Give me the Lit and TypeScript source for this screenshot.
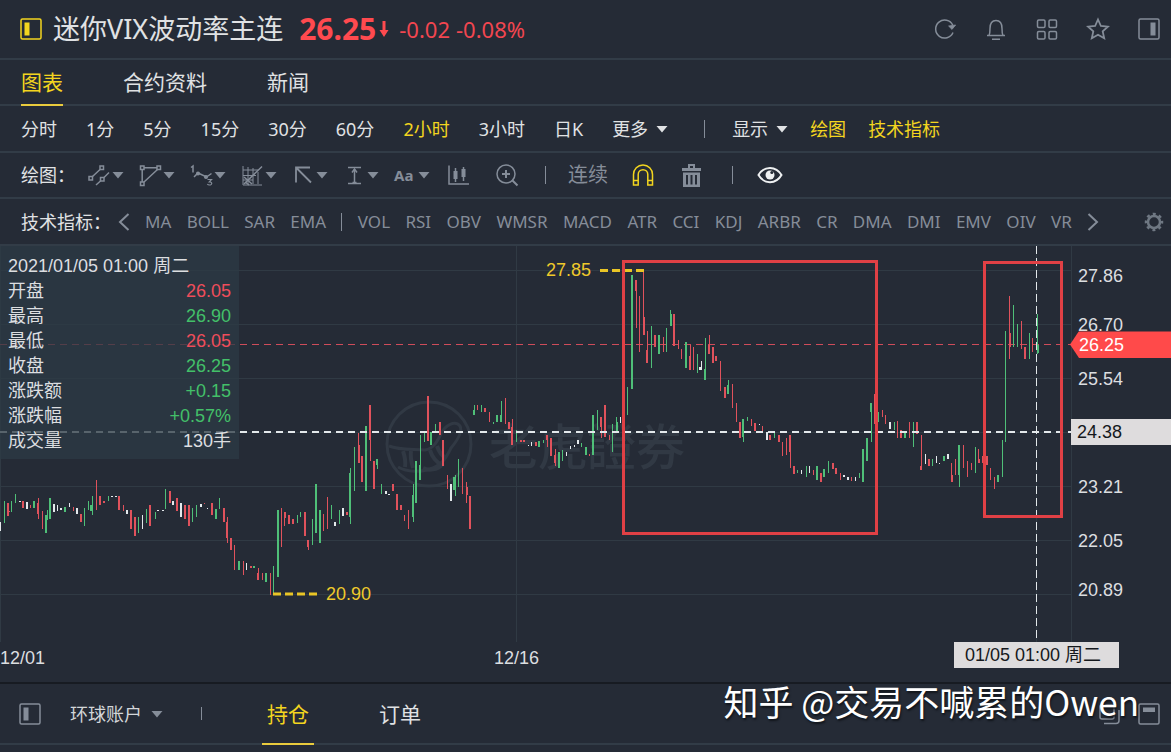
import { LitElement, html, svg, css } from "lit";
import { customElement, state } from "lit/decorators.js";
import { classMap } from "lit/directives/class-map.js";
import { styleMap } from "lit/directives/style-map.js";

const PLOT_W = 1071;
const PLOT_H = 396;
const STRIP_W = 1171;

type Tone = "r" | "g" | "w";
type Bar = { x: number; top: number; bottom: number; tone: Tone; width: number };

/* Bars are listed per section as "tone x high low [width]", in thirds of a pixel from the section origin. */
const SECTIONS: [number, number, string][] = [
  [0, 224, `w 1 155 183 1,g 12 94 158 1,r 23 98 138 2,r 28 122 126 1,g 34 94 125 1,g 46 72 98 1,w 60 93 97 2,r 69 94 113 2,
    w 80 97 116 2,r 91 104 114 1,g 103 92 114 2,r 115 84 146 1,r 114 100 133 2,r 127 124 178 1,g 138 135 188 2,g 142 120 150 1,g 149 84 146 2,
    w 161 101 125 2,w 172 104 123 1,w 184 113 120 2,g 195 112 126 2,w 208 98 110 1,r 219 110 123 1,w 230 113 132 2,
    r 243 133 156 2,g 254 115 168 1,g 265 92 120 1,g 276 78 135 1,g 273 105 123 2,r 290 30 120 1,r 299 78 104 2,r 311 93 100 2,
    g 324 78 94 1,w 336 77 81 2,w 348 77 81 2,r 357 78 120 2,r 370 105 123 1,w 382 121 132 2,r 393 120 178 2,
    r 405 140 197 2,g 415 140 188 1,w 428 135 178 1,g 438 118 158 1,r 450 105 168 2,g 465 125 147 1,w 475 120 124 2,
    w 489 120 124 2,g 496 57 118 1,r 510 62 99 2,w 519 93 105 2,r 531 85 123 2,w 543 98 140 2,r 555 105 147 2,
    r 567 105 168 2,g 578 115 157 1,g 590 105 140 1,w 602 103 110 2,r 613 98 103 1,w 622 113 117 1,r 635 98 136 2,
    g 648 118 147 2,g 658 84 118 1,r 671 114 156 2,r 682 140 219 1,r 682 155 205 2,r 693 203 240 2,r 703 226 300 1,
    g 717 272 300 2,r 729 272 314 1,w 740 279 300 1,r 752 288 293 2,g 762 288 294 2,r 774 294 330 1,r 774 309 330 2,
    r 786 309 330 1,g 798 309 335 2,r 811 309 375 1,g 821 287 375 1,g 834 120 321 2,r 844 114 230 1`],
  [260, 134, `r 74 396 437 1,r 74 396 415 2,r 86 406 433 2,r 98 417 432 2,g 111 405 430 1,g 122 397 410 1,r 135 396 468 2,
    r 145 480 510 1,r 143 480 500 2,g 156 417 494 1,g 168 312 458 2,g 180 390 489 2,r 191 402 452 1,r 202 352 447 1,
    g 215 375 417 1,w 225 426 437 2,g 238 390 432 1,w 249 384 407 2,r 261 396 404 2,g 270 264 432 1,g 269 280 410 2,
    g 283 200 332 1,r 296 160 249 1,r 296 195 249 2,r 306 228 306 2,g 318 138 332 2,r 330 75 243 1,r 330 75 180 2,r 342 243 327 2,
    g 352 237 268 1,g 350 237 255 2,g 365 312 341 1,w 377 333 341 2,w 388 341 346 2,r 399 312 333 2,r 410 342 390 2,
    r 423 375 390 2,r 432 405 423 1,r 445 390 446 1,g 459 312 425 1,g 460 345 410 2,g 468 243 368 2,g 481 165 299 1,g 480 255 299 2,
    g 492 155 185 1,r 503 48 182 2,g 513 155 195 2,g 527 132 155 1,r 540 126 165 2,r 549 180 258 2,r 562 285 326 1,
    w 573 312 362 2,g 585 285 348 1,g 583 290 330 2,g 596 237 320 1,r 607 264 342 1,r 620 306 368 1,r 620 320 345 2,r 630 348 446 2`],
  [460, 4, `g 42 465 494 1,g 41 480 494 2,r 53 465 480 1,g 65 465 486 1,r 74 474 486 2,r 88 486 516 1,g 101 516 522 1,
    g 111 495 516 2,g 123 453 516 1,g 122 495 516 2,r 135 445 521 1,r 146 516 537 2,r 157 507 584 1,r 155 530 584 2,
    g 170 540 575 1,r 182 570 575 2,r 193 570 575 2,w 206 584 587 1,w 215 577 587 1,r 227 575 587 2,g 237 573 590 2,
    g 250 570 578 1,r 261 555 590 1,r 261 555 570 2,r 273 565 617 2,r 285 597 648 1,r 285 615 640 2,g 296 605 654 2,g 307 600 633 1,
    w 319 606 618 1,w 331 588 597 1,w 342 585 592 1,w 354 570 582 2,g 365 580 590 1,g 377 590 615 2,r 389 612 617 1,
    g 399 495 615 2,g 412 480 540 1,r 423 500 565 1,r 423 500 530 2,r 435 465 560 2,r 447 555 570 1,g 458 521 606 1,
    g 470 500 543 1,g 471 515 543 2,w 481 501 518 1,g 503 411 494 1,g 516 75 416 2,r 528 90 234 1,r 528 90 122 2,
    r 538 138 306 1,r 550 60 255 1,r 552 200 255 2,r 562 243 338 1,r 561 300 338 2,g 574 228 353 1,r 586 255 290 2,
    g 597 255 311 2,r 610 262 305 1,g 619 234 306 1,g 632 180 227 1,g 633 192 227 2`],
  [640, 4, `r 101 192 288 2,r 115 270 296 1,r 125 298 326 1,g 137 276 353 2,r 150 284 360 1,r 150 318 360 2,r 160 290 360 1,
    g 172 312 368 1,w 184 332 360 1,w 181 350 360 2,g 196 264 389 1,g 195 357 389 2,r 207 255 311 1,r 207 285 311 2,
    r 219 290 338 2,r 229 318 332 2,r 242 333 423 1,r 255 410 443 2,g 265 390 432 1,g 264 405 432 2,r 277 402 474 1,
    r 288 458 516 1,r 300 516 564 2,g 311 507 576 1,g 309 507 560 2,g 322 500 514 1,r 335 506 528 1,r 346 520 543 2,
    w 358 521 525 1,r 368 527 542 1,w 382 545 570 2,r 391 555 570 2,g 404 545 564 1,r 417 555 576 2,r 428 576 618 1,
    r 438 564 616 1,r 450 555 654 1,r 450 555 605 2,r 461 648 671 2,g 472 659 669 1,w 485 660 672 1,g 498 648 682 1,
    w 508 648 670 1,r 520 659 675 1,g 531 648 690 2,r 543 668 695 2,g 552 658 682 2,g 565 632 668 1,r 578 639 656 2,
    r 589 655 672 2,r 601 668 690 1,w 612 675 681 2,w 624 681 690 2,r 635 681 694 1,w 646 681 692 1,g 658 669 684 1,
    g 669 597 695 2,g 681 564 632 2,g 693 458 576 1,g 692 458 485 2,r 704 432 522 1,g 715 486 515 1,r 727 480 502 1,
    r 737 495 522 1,w 750 516 537 2,g 762 516 540 1`],
  [860, 4, `r 112 514 565 1,r 124 540 564 2,g 136 548 564 2,r 148 516 564 1,g 160 516 590 1,r 171 516 552 2,r 183 555 659 1,
    r 183 648 659 2,w 195 612 642 1,r 207 627 647 2,g 217 627 648 1,w 229 618 640 1,w 239 638 643 1,g 251 618 632 2,
    w 264 612 628 2,r 275 639 696 1,r 275 675 696 2,r 286 626 675 1,g 298 585 710 1,g 297 585 675 2,r 310 585 655 1,
    r 322 632 681 1,r 333 639 659 1,g 346 591 668 1,r 356 597 639 1,r 357 627 639 2,r 368 618 640 1,r 380 618 645 2,r 391 654 690 1,
    r 403 681 717 1,g 414 675 695 2,g 427 570 682 1,g 437 243 576 1,r 448 138 326 1,r 450 250 290 1,g 460 165 290 1,g 472 222 290 1,
    r 484 213 298 1,r 495 290 326 2,g 507 248 326 1,g 508 260 326 1,r 518 264 306 1,g 532 192 312 1,g 533 285 310 2`],
];

const BARS: Bar[] = SECTIONS.flatMap(([ox, oy, list]) =>
  list.split(",").map((entry) => {
    const [tone, x, top, bottom, width] = entry.trim().split(/\s+/);
    const w = Number(width);
    return {
      tone: tone as Tone,
      width: w,
      x: Math.round(ox + Number(x) / 3 - w / 2),
      top: Math.round(oy + Number(top) / 3),
      bottom: Math.round(oy + Number(bottom) / 3),
    };
  }),
);

const pct = (value: number, total: number) => `${(value / total) * 100}%`;

const caret = html`<svg class="caret" width="12" height="8" viewBox="0 0 12 8" aria-hidden="true">
  <path d="M0.5 1h11L6 7.5z" fill="currentColor" /></svg>`;

const panelIcon = (side: "left" | "right" | "top") => html`<svg width="24" height="24" viewBox="0 0 24 24" aria-hidden="true">
  <rect x="2" y="2" width="20" height="20" rx="1.5" fill="none" stroke="currentColor" stroke-width="1.5" />
  ${side === "left" ? svg`<rect x="5.5" y="5.5" width="5" height="13" fill="currentColor" />` : null}
  ${side === "right" ? svg`<rect x="13.5" y="5.5" width="5" height="13" fill="currentColor" />` : null}
  ${side === "top" ? svg`<rect x="6" y="5.5" width="12" height="4.5" fill="currentColor" />` : null}
</svg>`;

const icon = (body: unknown, size = 24) => html`<svg width=${size} height="24" viewBox="0 0 ${size} 24"
  fill="none" stroke="currentColor" stroke-width="1.5" aria-hidden="true">${body}</svg>`;

const HEADER_ICONS: [string, unknown][] = [
  ["刷新", svg`<path d="M19.8 8.2A9 9 0 1 0 20 15.5" /><path d="M15.6 9l3.4 3.4L22.6 8z" fill="currentColor" stroke-width="0.8" />`],
  ["提醒", svg`<path d="M3 18.500h18M5 18.500c1-2 1-4 1-7C6 6.500 8 3.500 12 3.500s6 3 6 8c0 3 0 5 1 7M8 22.200h8" />`],
  ["布局", svg`<rect x="2.500" y="3" width="7.500" height="7.500" rx="1.200" /><rect x="14" y="3" width="7.500" height="7.500" rx="1.200" /><rect x="2.500" y="14.500" width="7.500" height="7.500" rx="1.200" /><rect x="14" y="14.500" width="7.500" height="7.500" rx="1.200" />`],
  ["自选", svg`<path d="M12 2.500l2.900 6.500 7 .7-5.200 4.700 1.500 6.900L12 17.700l-6.200 3.600 1.500-6.900L2.100 9.700l7-.7z" stroke-width="1.800" />`],
];

const DRAW_TOOLS: [string, unknown][] = [
  ["线段", svg`<rect x="1" y="13.500" width="3.500" height="3.500" /><rect x="12" y="3" width="3.500" height="3.500" /><rect x="12.500" y="14.500" width="3.500" height="3.500" /><path d="M4.500 13.500L12 6.500M8 22l4.500-4M16 14.500L21 9.500" />`],
  ["形状", svg`<rect x="1.500" y="3" width="3.500" height="3.500" /><rect x="18" y="3" width="3.500" height="3.500" /><rect x="1.500" y="19" width="3.500" height="3.500" /><path d="M5 4.700h13M3.200 6.500V19M5 19L18.500 6.500" />`],
  ["波浪", svg`<path d="M1 4.500l2-1.500V9.500M4 14l4-4 8.500 4 5-3.500" /><circle cx="8" cy="10.500" r="1.300" fill="currentColor" /><circle cx="16" cy="14" r="1.300" fill="currentColor" /><path d="M17.500 16.500h4l-2.200 2.300c3.500 0 3 3.500 0 3.200-1 0-1.600-.5-2-1" stroke-width="1.200" />`],
  ["斐波那契", svg`<path d="M2 3v19h19M2 7h15M2 12.500h13M2 17h10M7 4v17M12 5v16M17 9v12" stroke-width="1" /><path d="M3 21L21 3.500M3 14l8 7M4 19l4 3" />`],
  ["箭头", svg`<path d="M4 19.500V4.500h14M5 5.500L19 19.500" stroke-width="1.800" />`],
  ["测量", svg`<path d="M5 4.500h13M5 20.500h13M11.500 6v14" /><path d="M9 9.500l2.500-3.500L14 9.500M9.500 19.500h4" />`],
];

const PERIODS = ["分时", "1分", "5分", "15分", "30分", "60分", "2小时", "3小时", "日K"];
const MAIN_INDICATORS = ["MA", "BOLL", "SAR", "EMA"];
const SUB_INDICATORS = ["VOL", "RSI", "OBV", "WMSR", "MACD", "ATR", "CCI", "KDJ", "ARBR", "CR", "DMA", "DMI", "EMV", "OIV", "VR"];
const QUOTE: [string, string, string][] = [
  ["开盘", "26.05", "down"],
  ["最高", "26.90", "up"],
  ["最低", "26.05", "down"],
  ["收盘", "26.25", "up"],
  ["涨跌额", "+0.15", "up"],
  ["涨跌幅", "+0.57%", "up"],
  ["成交量", "130手", ""],
];
const TICKS: [string, number][] = [
  ["27.86", 30], ["26.70", 79], ["25.54", 133], ["23.21", 241], ["22.05", 295], ["20.89", 344],
];
const GRID_ROWS = [24, 78, 132, 186, 240, 294, 348];

@customElement("price-chart")
export class PriceChart extends LitElement {
  static styles = css`
    :host {
      display: grid;
      grid-template-columns: minmax(0, 1fr) 100px;
      grid-template-rows: minmax(0, 1fr) 40px;
      font: 18px/24px "Liberation Sans", "Noto Sans CJK SC", sans-serif;
      color: #dcdee0;
      overflow: hidden;
    }
    .plot, .axis, .dates { position: relative; }
    .dates { grid-column: 1 / -1; }
    .canvas { position: absolute; inset: 0; width: 100%; height: 100%; display: block; overflow: visible; }
    .brand {
      position: absolute;
      display: flex;
      align-items: center;
      gap: 16px;
      transform: translateY(-50%);
      color: #313944;
      font: 500 49px/56px "Noto Sans CJK TC", sans-serif;
      white-space: nowrap;
    }
    .grid { stroke: #303a44; }
    .bar-r { fill: #e0525c; }
    .bar-g { fill: #4fbf78; }
    .bar-w { fill: #e4e9ec; }
    .mark { position: absolute; transform: translateY(-50%); color: #efc92b; }
    .tick { position: absolute; left: 7px; transform: translateY(-50%); }
    .last {
      position: absolute; left: -1px; right: 0; height: 27px; padding-left: 9px;
      transform: translateY(-50%); box-sizing: border-box; line-height: 27px;
      background: #ff4a4a; color: #fff;
      clip-path: polygon(0 50%, 9px 0, 100% 0, 100% 100%, 9px 100%);
    }
    .cursor {
      position: absolute; left: 0; right: 0; height: 26px; padding-left: 6px;
      transform: translateY(-50%); box-sizing: border-box; line-height: 26px;
      background: #dedcdd; color: #15181c;
    }
    .date { position: absolute; top: 4px; }
    .date-cursor {
      position: absolute; top: 0; height: 26px; padding: 0 18px 0 11px; line-height: 26px;
      background: #dedcdd; color: #15181c; white-space: nowrap;
    }
    .legend {
      position: absolute; left: 0; top: 0; width: 239px; box-sizing: border-box;
      padding: 8px 8px 5px; background: rgba(45, 58, 69, 0.76); line-height: 25px;
    }
    .legend-row { display: flex; justify-content: space-between; margin: 0; }
    .legend dl, .legend dd { margin: 0; }
    .up { color: #43c069; }
    .down { color: #ef4d5b; }
  `;

  render() {
    return html`
      <div class="plot">
        <div class="brand" style=${styleMap({ left: pct(385, PLOT_W), top: pct(198, PLOT_H) })}>
          <svg width="88" height="88" viewBox="0 0 88 88" fill="none" stroke="currentColor" stroke-width="3" aria-hidden="true">
            <circle cx="44" cy="44" r="42" />
            <path d="M4 46c10 4 22 3 36 4 8-1 12-8 16-16 4-9 14-14 19-8 3 6-4 16-9 22-4 8-8 16-18 20-12 5-26 4-35-1" stroke-width="3" />
            <path d="M18 51c2 6 3 10 2 16M26 51c-1 6 0 10 2 17M45 50c2 7 6 12 12 15M52 46c2 6 5 10 9 12M38 68c6 3 14 2 20-4" stroke-width="4" />
          </svg>
          <span>老虎證券</span>
        </div>
        <svg class="canvas" viewBox="0 0 ${PLOT_W} ${PLOT_H}" preserveAspectRatio="none" role="img" aria-label="K线图">
          <g class="grid">
            ${GRID_ROWS.map((y) => svg`<line x1="0" x2=${PLOT_W} y1=${y + 0.5} y2=${y + 0.5} />`)}
            ${[0.5, 516.5, 1036.5, 1071.5].map((x) => svg`<line x1=${x} x2=${x} y1="0" y2=${PLOT_H} />`)}
          </g>
          <line x1="0" x2=${PLOT_W} y1="98.500" y2="98.500" stroke="#cf4c5a" stroke-dasharray="7 5" />
          <g shape-rendering="crispEdges">
            ${BARS.map((b) => svg`<rect class="bar-${b.tone}" x=${b.x} y=${b.top} width=${b.width} height=${Math.max(1, b.bottom - b.top)} />`)}
          </g>
          <line x1="0" x2=${PLOT_W} y1="186" y2="186" stroke="#e3e8eb" stroke-width="2" stroke-dasharray="7 5" />
          <line x1="1036.500" x2="1036.500" y1="0" y2=${PLOT_H} stroke="#e3e8eb" stroke-dasharray="8 4" />
          <line x1="600" x2="644" y1="24.500" y2="24.500" stroke="#e9c526" stroke-width="3" stroke-dasharray="8 4" />
          <line x1="273" x2="317" y1="348" y2="348" stroke="#e9c526" stroke-width="3" stroke-dasharray="8 4" />
          <g fill="none" stroke="#e04045" stroke-width="3">
            <rect x="623.500" y="15.500" width="253" height="272" />
            <rect x="984.500" y="16.500" width="77" height="254" />
          </g>
        </svg>
        <span class="mark" style=${styleMap({ left: pct(546, PLOT_W), top: pct(24, PLOT_H) })}>27.85</span>
        <span class="mark" style=${styleMap({ left: pct(326, PLOT_W), top: pct(348, PLOT_H) })}>20.90</span>
        <div class="legend">
          <div>2021/01/05 01:00 周二</div>
          <dl>
            ${QUOTE.map(([name, value, tone]) => html`<div class="legend-row"><dt>${name}</dt><dd class=${tone}>${value}</dd></div>`)}
          </dl>
        </div>
      </div>
      <div class="axis">
        ${TICKS.map(([label, y]) => html`<span class="tick" style=${styleMap({ top: pct(y, PLOT_H) })}>${label}</span>`)}
        <span class="last" style=${styleMap({ top: pct(98.5, PLOT_H) })}>26.25</span>
        <span class="cursor" style=${styleMap({ top: pct(186, PLOT_H) })}>24.38</span>
      </div>
      <div class="dates">
        <span class="date" style=${styleMap({ left: pct(0, STRIP_W) })}>12/01</span>
        <span class="date" style=${styleMap({ left: pct(494, STRIP_W) })}>12/16</span>
        <span class="date-cursor" style=${styleMap({ left: pct(954, STRIP_W) })}>01/05 01:00 周二</span>
      </div>
    `;
  }
}

@customElement("app-root")
export class AppRoot extends LitElement {
  static styles = css`
    :host {
      display: flex;
      flex-direction: column;
      position: relative;
      height: 100vh;
      min-height: 620px;
      overflow: hidden;
      background: #252b36;
      color: #e0e2e4;
      font: 18px/24px "Noto Sans", "Noto Sans CJK SC", sans-serif;
    }
    button, select {
      appearance: none; margin: 0; padding: 0; border: 0; background: none;
      color: inherit; font: inherit; cursor: pointer; white-space: nowrap;
    }
    svg { display: block; flex: none; }
    .row {
      display: flex; align-items: center; flex: none; box-sizing: border-box;
      height: 47px; padding: 0 10px 0 21px; border-bottom: 2px solid #323c47;
    }
    .header { height: 60px; padding-left: 19px; }
    .short { height: 46px; }
    .accent { color: #f3d51f; }
    .muted { color: #858d99; }
    .title { margin: 0 0 0 10px; font-size: 27px; line-height: 36px; font-weight: 400; }
    .price { margin-left: 16px; color: #ff4a4f; font-size: 30px; line-height: 36px; font-weight: 700; }
    .drop { margin: 0 10px 0 3px; color: #ff4a4f; }
    .change { color: #f24650; font-size: 22px; line-height: 28px; margin-right: 6px; }
    .header-icons { display: flex; gap: 27px; margin-left: auto; color: #858d99; }
    .tabs { gap: 60px; align-items: stretch; font-size: 21px; }
    .tab { position: relative; }
    .tab.on { color: #f3d51f; }
    .tab.on::after {
      content: ""; position: absolute; left: 0; right: 0; bottom: -2px; height: 2px; background: #e9cb3d;
    }
    .periods { display: flex; gap: 29px; }
    .menu { display: flex; align-items: center; gap: 8px; }
    .sep { flex: none; width: 1px; height: 18px; background: #858d99; }
    .period-sep { margin: 0 27px 0 36px; }
    .views { display: flex; gap: 22px; }
    .tools { display: flex; margin-left: 13px; color: #858d99; }
    .tool { display: flex; align-items: center; width: 51px; }
    .letters { width: 24px; font: 700 15px/24px "Noto Sans", sans-serif; text-align: left; }
    .extras { display: flex; align-items: center; gap: 22px; color: #858d99; }
    .extras .sep { margin: 0 0 0 4px; }
    .extras .last-sep { margin: 0 2px 0 6px; }
    .continuous { font-size: 20px; }
    .eye { color: #eef0f1; }
    .indicator-row { padding-right: 7px; }
    .indicators {
      display: flex; flex: 1; align-items: center; justify-content: space-between;
      margin: 0 14px; color: #858d99; font-size: 17px;
    }
    .arrow-left { margin-left: 6px; }
    .gear { margin-left: 44px; color: #6f7883; }
    price-chart { flex: 1; min-height: 0; }
    .footer {
      height: 63px; align-items: stretch; border-top: 2px solid #171b22; padding-left: 18px; margin-bottom: 7px;
    }
    .footer-left { display: flex; align-items: center; color: #858d99; }
    .account { display: flex; align-items: center; gap: 9px; margin-left: 28px; }
    .account select { color: #d3d6d9; }
    .account-sep { height: 13px; margin: 0 60px 0 38px; }
    .footer-tabs { display: flex; gap: 60px; font-size: 21px; }
    .footer-tabs .tab { padding: 0 5px; }
    .footer-icons { display: flex; align-items: center; gap: 16px; margin-left: auto; color: #858d99; }
    .signature {
      position: absolute; right: 32px; bottom: 28px; color: #fff;
      font: 35px/46px "Noto Sans CJK SC", sans-serif; text-shadow: 1px 2px 2px #11151b;
      white-space: nowrap; pointer-events: none;
    }
  `;

  @state() private tab = "图表";
  @state() private period = "2小时";
  @state() private book = "持仓";

  private tabButton(label: string, current: string, pick: (v: string) => void) {
    return html`<button class=${classMap({ tab: true, on: label === current })} @click=${() => pick(label)}>${label}</button>`;
  }

  render() {
    return html`
      <header class="row header">
        <button class="accent" aria-label="侧栏">${panelIcon("left")}</button>
        <h1 class="title">迷你VIX波动率主连</h1>
        <span class="price">26.25</span>
        <svg class="drop" width="10" height="20" viewBox="0 0 10 20" aria-hidden="true">
          <path d="M3.500 2h3v9h3L5 18 0.500 11h3z" fill="currentColor" /></svg>
        <span class="change">-0.02</span>
        <span class="change">-0.08%</span>
        <div class="header-icons">
          ${HEADER_ICONS.map(([label, body]) => html`<button aria-label=${label}>${icon(body)}</button>`)}
          <button aria-label="右侧栏">${panelIcon("right")}</button>
        </div>
      </header>

      <nav class="row short tabs">
        ${["图表", "合约资料", "新闻"].map((t) => this.tabButton(t, this.tab, (v) => (this.tab = v)))}
      </nav>

      <div class="row">
        <div class="periods">
          ${PERIODS.map((p) => html`<button class=${classMap({ accent: p === this.period })} @click=${() => (this.period = p)}>${p}</button>`)}
          <button class="menu" aria-haspopup="menu">更多 ${caret}</button>
        </div>
        <span class="sep period-sep"></span>
        <div class="views">
          <button class="menu" aria-haspopup="menu">显示 ${caret}</button>
          <button class="accent">绘图</button>
          <button class="accent">技术指标</button>
        </div>
      </div>

      <div class="row short">
        <span>绘图：</span>
        <div class="tools">
          ${DRAW_TOOLS.map(([label, body]) => html`<button class="tool" aria-label=${label}>${icon(body)}${caret}</button>`)}
          <button class="tool" aria-label="文字"><span class="letters">Aa</span>${caret}</button>
        </div>
        <div class="extras">
          <button aria-label="K线形态">${icon(svg`<path d="M4 2.500v18.500h20M10.500 5v14M18.500 4v14" /><path d="M10.500 8v8M18.500 6v8" stroke-width="4" />`, 26)}</button>
          <button aria-label="放大">${icon(svg`<circle cx="13" cy="11" r="9" /><path d="M19.500 17.500l5 5M13 7v8M9 11h8" stroke-width="2" />`, 26)}</button>
          <span class="sep"></span>
          <button class="continuous">连续</button>
          <button class="accent" aria-label="磁吸">${icon(svg`<path d="M3.500 22V11.500a9.500 9.500 0 0 1 19 0V22h-4.700V11.500a4.800 4.800 0 0 0-9.600 0V22zM3.500 17.500h4.700M17.800 17.500h4.700" />`, 26)}</button>
          <button aria-label="删除">${icon(svg`<path d="M4 5h19v3H4zM10 1h7v4h-2V3h-3v2h-2z" fill="currentColor" stroke="none" /><path fill-rule="evenodd" d="M5 9.500h17V24H5zM8 12v9.500h2V12zm4.500 0v9.500h2V12zm4.500 0v9.500h2V12z" fill="currentColor" stroke="none" />`, 26)}</button>
          <span class="sep last-sep"></span>
          <button class="eye" aria-label="显示绘图">${icon(svg`<path d="M1.500 12C7 2.500 19 2.500 24.500 12 19 21.500 7 21.500 1.500 12z" stroke-width="2" /><circle cx="13" cy="12" r="4.500" fill="currentColor" stroke="none" /><circle cx="14.800" cy="9.500" r="1.500" fill="#252b36" stroke="none" />`, 26)}</button>
        </div>
      </div>

      <div class="row indicator-row">
        <span>技术指标：</span>
        <button class="muted arrow-left" aria-label="上一页"><svg width="14" height="20" viewBox="0 0 14 20" fill="none" stroke="currentColor" stroke-width="2" aria-hidden="true"><path d="M11.500 2L3 10l8.500 8" /></svg></button>
        <div class="indicators">
          ${MAIN_INDICATORS.map((i) => html`<button>${i}</button>`)}
          <span class="sep"></span>
          ${SUB_INDICATORS.map((i) => html`<button>${i}</button>`)}
        </div>
        <button class="muted" aria-label="下一页"><svg width="14" height="20" viewBox="0 0 14 20" fill="none" stroke="currentColor" stroke-width="2" aria-hidden="true"><path d="M2.500 2L11 10l-8.500 8" /></svg></button>
        <button class="gear" aria-label="设置"><svg width="20" height="20" viewBox="0 0 20 20" fill="none" stroke="currentColor" aria-hidden="true">
          <circle cx="10" cy="10" r="6" stroke-width="2.500" /><circle cx="10" cy="10" r="8" stroke-width="2.500" stroke-dasharray="3 3.283" stroke-dashoffset="1.500" /></svg></button>
      </div>

      <price-chart></price-chart>

      <footer class="row footer">
        <div class="footer-left">
          <button aria-label="账户栏">${panelIcon("left")}</button>
          <label class="account"><select aria-label="账户"><option>环球账户</option></select>${caret}</label>
          <span class="sep account-sep"></span>
        </div>
        <div class="footer-tabs">
          ${["持仓", "订单"].map((t) => this.tabButton(t, this.book, (v) => (this.book = v)))}
        </div>
        <div class="footer-icons">
          <button aria-label="弹出窗口">${icon(svg`<rect x="3" y="3" width="14" height="14" rx="2" /><path d="M7 21.500h12a3 3 0 0 0 3-3V8" />`)}</button>
          <button aria-label="展开">${panelIcon("top")}</button>
        </div>
      </footer>
      <div class="signature">知乎 @交易不喊累的Owen</div>
    `;
  }
}
